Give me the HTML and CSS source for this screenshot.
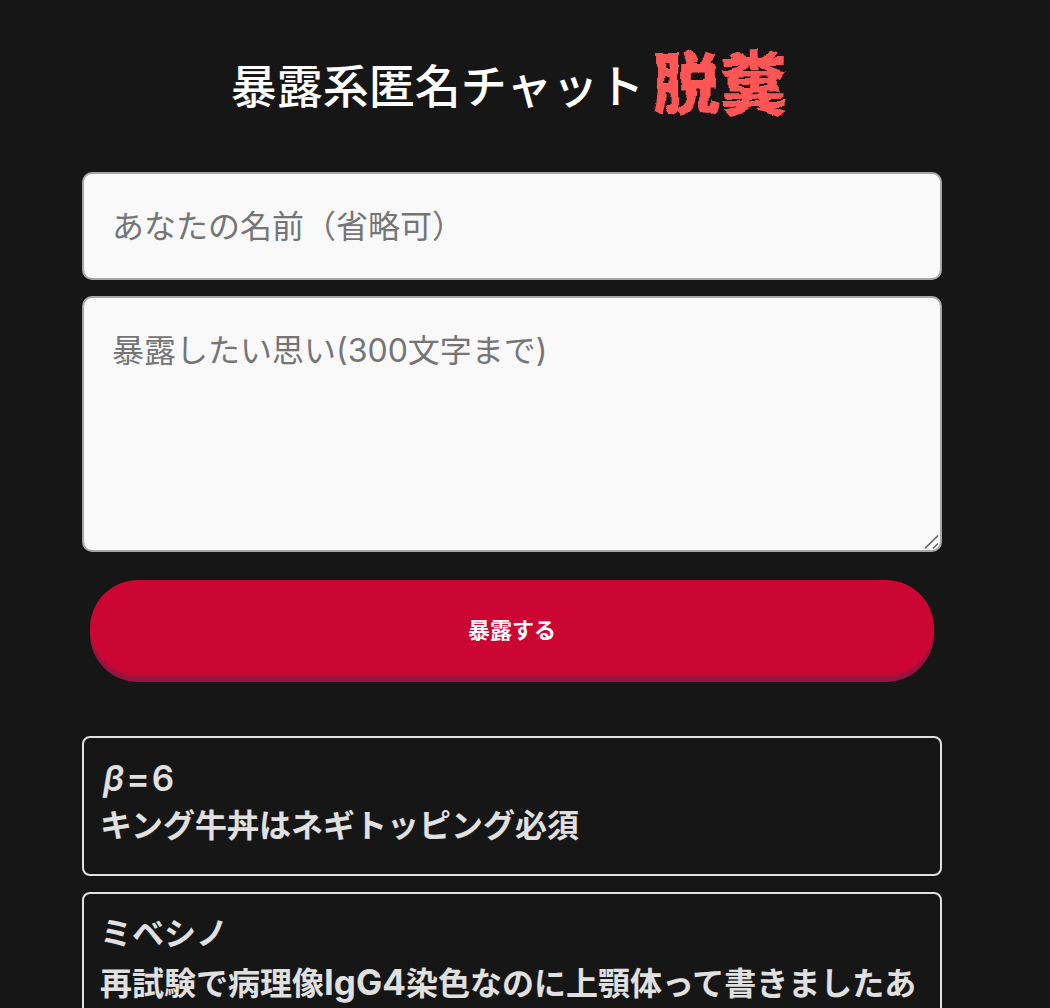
FILE: index.html
```html
<!DOCTYPE html>
<html lang="ja">
<head>
<meta charset="utf-8">
<title>暴露系匿名チャット脱糞</title>
<link rel="stylesheet" href="styles.css">
</head>
<body>
<svg class="defs" width="0" height="0" aria-hidden="true">
  <filter id="rough" x="-5%" y="-5%" width="110%" height="110%">
    <feTurbulence type="fractalNoise" baseFrequency="0.045" numOctaves="2" seed="4" result="noise"/>
    <feDisplacementMap in="SourceGraphic" in2="noise" scale="9" xChannelSelector="R" yChannelSelector="G"/>
  </filter>
</svg>
<main class="page">
  <h1 class="title"><span>暴露系匿名チャット</span><span class="title-mark">脱糞</span></h1>
  <form class="form">
    <input class="field name-field" type="text" placeholder="あなたの名前（省略可）">
    <textarea class="field body-field" placeholder="暴露したい思い(300文字まで)"></textarea>
    <button class="submit" type="button">暴露する</button>
  </form>
  <section class="posts">
    <article class="post">
      <div class="post-name"><span class="latin latin-wide"><i class="beta">β</i>=6</span></div>
      <div class="post-text">キング牛丼はネギトッピング必須</div>
    </article>
    <article class="post">
      <div class="post-name">ミベシノ</div>
      <div class="post-text">再試験で病理像<span class="latin">IgG4</span>染色なのに上顎体って書きましたあ</div>
    </article>
  </section>
</main>
</body>
</html>
```
FILE: styles.css
```css
* { box-sizing: border-box; }
html, body { margin: 0; height: 100%; overflow: hidden; }
body {
  background: #161616;
  font-family: Inter, "Noto Sans CJK JP", sans-serif;
  color: #e0e0e0;
}
.defs { position: absolute; }
.page { width: 860px; margin-left: 82px; }
.title {
  margin: 0;
  height: 172px;
  padding-top: 47px;
  padding-right: 5px;
  display: flex;
  justify-content: center;
  align-items: flex-start;
  font-family: "Noto Sans CJK JP", sans-serif;
  font-size: 46px;
  line-height: 72px;
  font-weight: 500;
  color: #fff;
}
.title-mark {
  margin-left: 8px;
  margin-top: -3px;
  font-size: 68px;
  line-height: 72px;
  font-weight: 900;
  color: #ff5555;
  filter: url(#rough);
}
.form { display: flex; flex-direction: column; }
.field {
  display: block;
  width: 100%;
  background: #f9f9f9;
  border: 2px solid #a6a6a6;
  border-radius: 10px;
  font-family: Inter, "Noto Sans CJK JP", sans-serif;
  font-size: 32px;
  color: #222;
  outline: none;
}
.field::placeholder { color: #757575; opacity: 1; }
.name-field { height: 108px; padding: 0 28px; margin-bottom: 16px; }
.body-field { height: 256px; padding: 31px 28px; line-height: 44px; resize: vertical; }
.body-field::-webkit-resizer {
  background: url("data:image/svg+xml,%3Csvg xmlns='http://www.w3.org/2000/svg' width='15' height='15'%3E%3Cpath d='M0 13.5 13 .5M8 13.5l5-5' stroke='%23666' stroke-width='1.6' fill='none'/%3E%3C/svg%3E") no-repeat;
}
.submit {
  align-self: center;
  width: 844px;
  height: 96px;
  margin-top: 28px;
  border: 0;
  border-radius: 48px;
  background: #cc0633;
  box-shadow: 0 6px 0 #961540;
  color: #fff;
  font-family: "Noto Sans CJK JP", sans-serif;
  font-size: 22px;
  font-weight: 700;
}
.posts { margin-top: 60px; display: flex; flex-direction: column; gap: 16px; }
.post {
  min-height: 140px;
  padding: 16px 16px;
  border: 2px solid #e0e0e0;
  border-radius: 8px;
  font-weight: 700;
  font-size: 32px;
  line-height: 48px;
}
.post-name { font-weight: 600; height: 48px; }
.latin { font-size: 35px; }
.latin-wide { letter-spacing: 2px; }
.beta { margin-left: 3px; }
.post-text { margin-top: 0; white-space: nowrap; }
```
